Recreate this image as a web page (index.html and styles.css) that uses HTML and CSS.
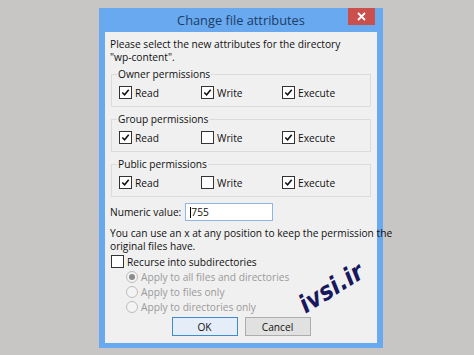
FILE: index.html
```html
<!DOCTYPE html>
<html>
<head>
<meta charset="utf-8">
<link rel="stylesheet" href="styles.css">
</head>
<body>
<div class="window">
  <div class="titlebar">
    <span class="title">Change file attributes</span>
    <span class="close"><svg width="9" height="9" viewBox="0 0 9 9"><path d="M1 1 L8 8 M8 1 L1 8" stroke="#fff" stroke-width="1.8" fill="none"/></svg></span>
  </div>
  <div class="content">
    <p class="intro">Please select the new attributes for the directory<br>"wp-content".</p>

    <fieldset class="group">
      <legend>Owner permissions</legend>
      <div class="row">
        <label class="cb"><span class="box"><svg viewBox="0 0 12 12"><path d="M2.5 6 L5 8.5 L9.5 3" /></svg></span>Read</label>
        <label class="cb"><span class="box"><svg viewBox="0 0 12 12"><path d="M2.5 6 L5 8.5 L9.5 3" /></svg></span>Write</label>
        <label class="cb"><span class="box"><svg viewBox="0 0 12 12"><path d="M2.5 6 L5 8.5 L9.5 3" /></svg></span>Execute</label>
      </div>
    </fieldset>

    <fieldset class="group">
      <legend>Group permissions</legend>
      <div class="row">
        <label class="cb"><span class="box"><svg viewBox="0 0 12 12"><path d="M2.5 6 L5 8.5 L9.5 3" /></svg></span>Read</label>
        <label class="cb"><span class="box"></span>Write</label>
        <label class="cb"><span class="box"><svg viewBox="0 0 12 12"><path d="M2.5 6 L5 8.5 L9.5 3" /></svg></span>Execute</label>
      </div>
    </fieldset>

    <fieldset class="group">
      <legend>Public permissions</legend>
      <div class="row">
        <label class="cb"><span class="box"><svg viewBox="0 0 12 12"><path d="M2.5 6 L5 8.5 L9.5 3" /></svg></span>Read</label>
        <label class="cb"><span class="box"></span>Write</label>
        <label class="cb"><span class="box"><svg viewBox="0 0 12 12"><path d="M2.5 6 L5 8.5 L9.5 3" /></svg></span>Execute</label>
      </div>
    </fieldset>

    <div class="numeric">
      <span class="numlabel">Numeric value:</span>
      <span class="input"><span class="caret"></span>755</span>
    </div>

    <p class="hint">You can use an x at any position to keep the permission the<br>original files have.</p>

    <label class="cb recurse"><span class="box"></span>Recurse into subdirectories</label>

    <div class="radios">
      <div class="radio"><span class="dot on"></span>Apply to all files and directories</div>
      <div class="radio"><span class="dot"></span>Apply to files only</div>
      <div class="radio"><span class="dot"></span>Apply to directories only</div>
    </div>

    <div class="buttons">
      <span class="btn default">OK</span>
      <span class="btn">Cancel</span>
    </div>
  </div>
  <div class="watermark">ivsi.ir</div>
</div>
</body>
</html>
```

FILE: styles.css
```css
html, body {
  margin: 0;
  padding: 0;
}
body {
  background: #c7c6c5;
  width: 474px;
  height: 355px;
  overflow: hidden;
  font-family: "Open Sans", "Noto Sans", sans-serif;
}
.window {
  position: relative;
  margin: 8px 0 0 99px;
  width: 284px;
  height: 340px;
  box-sizing: border-box;
  background: #68a9ef;
  padding: 0 6px 5px;
  display: flex;
  flex-direction: column;
}
.titlebar {
  height: 24px;
  display: grid;
  grid-template-columns: 1fr auto 1fr;
  align-items: center;
}
.title {
  grid-column: 2;
  font-size: 12.8px;
  color: #1d3d66;
  line-height: 24px;
}
.close {
  grid-column: 3;
  justify-self: end;
  align-self: start;
  margin-right: 2px;
  width: 27px;
  height: 17px;
  background: #c9504c;
  display: flex;
  align-items: center;
  justify-content: center;
}
.content {
  flex: 1;
  background: #f0f0f0;
  padding: 6px 5px 0;
  font-size: 10.2px;
  line-height: 12px;
  color: #111;
}
.intro {
  margin: 0 0 3px;
  line-height: 13px;
}
.group {
  margin: 0 1px 5px;
  border: 1px solid #dcdcdc;
  padding: 0 7px 7px;
}
.group legend {
  padding: 0 1px;
  margin-left: -2px;
  line-height: 14px;
}
.group:last-of-type {
  margin-bottom: 0;
}
.row {
  display: grid;
  grid-template-columns: 82px 81px auto;
  padding-top: 5px;
}
.cb {
  display: flex;
  align-items: center;
  gap: 3px;
  height: 13px;
}
.box {
  width: 11px;
  height: 11px;
  border: 1px solid #333;
  background: #fff;
  display: flex;
}
.box svg {
  width: 11px;
  height: 11px;
}
.box path {
  fill: none;
  stroke: #111;
  stroke-width: 1.7;
}
.numeric {
  display: flex;
  align-items: center;
  margin-top: 6px;
}
.numlabel {
  flex: none;
  white-space: nowrap;
  margin-right: 4px;
}
.input {
  width: 88px;
  height: 18px;
  box-sizing: border-box;
  border: 1px solid #8fb6e2;
  background: #fff;
  display: flex;
  align-items: center;
  padding-left: 4px;
}
.caret {
  width: 1px;
  height: 11px;
  background: #000;
}
.hint {
  margin: 6px 0 2px;
  line-height: 13px;
  white-space: nowrap;
}
.recurse {
  margin-left: 1px;
}
.radios {
  margin: 3px 0 0 16px;
  color: #9a9a9a;
  display: flex;
  flex-direction: column;
  gap: 3px;
}
.radio {
  display: flex;
  align-items: center;
  gap: 3px;
  height: 12px;
}
.dot {
  width: 10px;
  height: 10px;
  border: 1px solid #bcbcbc;
  border-radius: 50%;
  background: #f4f4f4;
  display: flex;
  align-items: center;
  justify-content: center;
}
.dot.on::after {
  content: "";
  width: 6px;
  height: 6px;
  border-radius: 50%;
  background: #8c8c8c;
}
.buttons {
  display: flex;
  justify-content: center;
  gap: 7px;
  margin-top: 4px;
}
.btn {
  width: 66px;
  height: 19px;
  box-sizing: border-box;
  border: 1px solid #adadad;
  background: #e1e1e1;
  display: flex;
  align-items: center;
  justify-content: center;
}
.btn.default {
  border-color: #3f8bd0;
  background: #e5eef8;
}
.watermark {
  position: absolute;
  left: 206px;
  top: 285px;
  font-family: "DejaVu Sans", sans-serif;
  font-stretch: condensed;
  font-weight: bold;
  font-style: italic;
  font-size: 25px;
  line-height: 1;
  color: #17175e;
  transform: rotate(-32deg);
  transform-origin: 0 20px;
}
```
